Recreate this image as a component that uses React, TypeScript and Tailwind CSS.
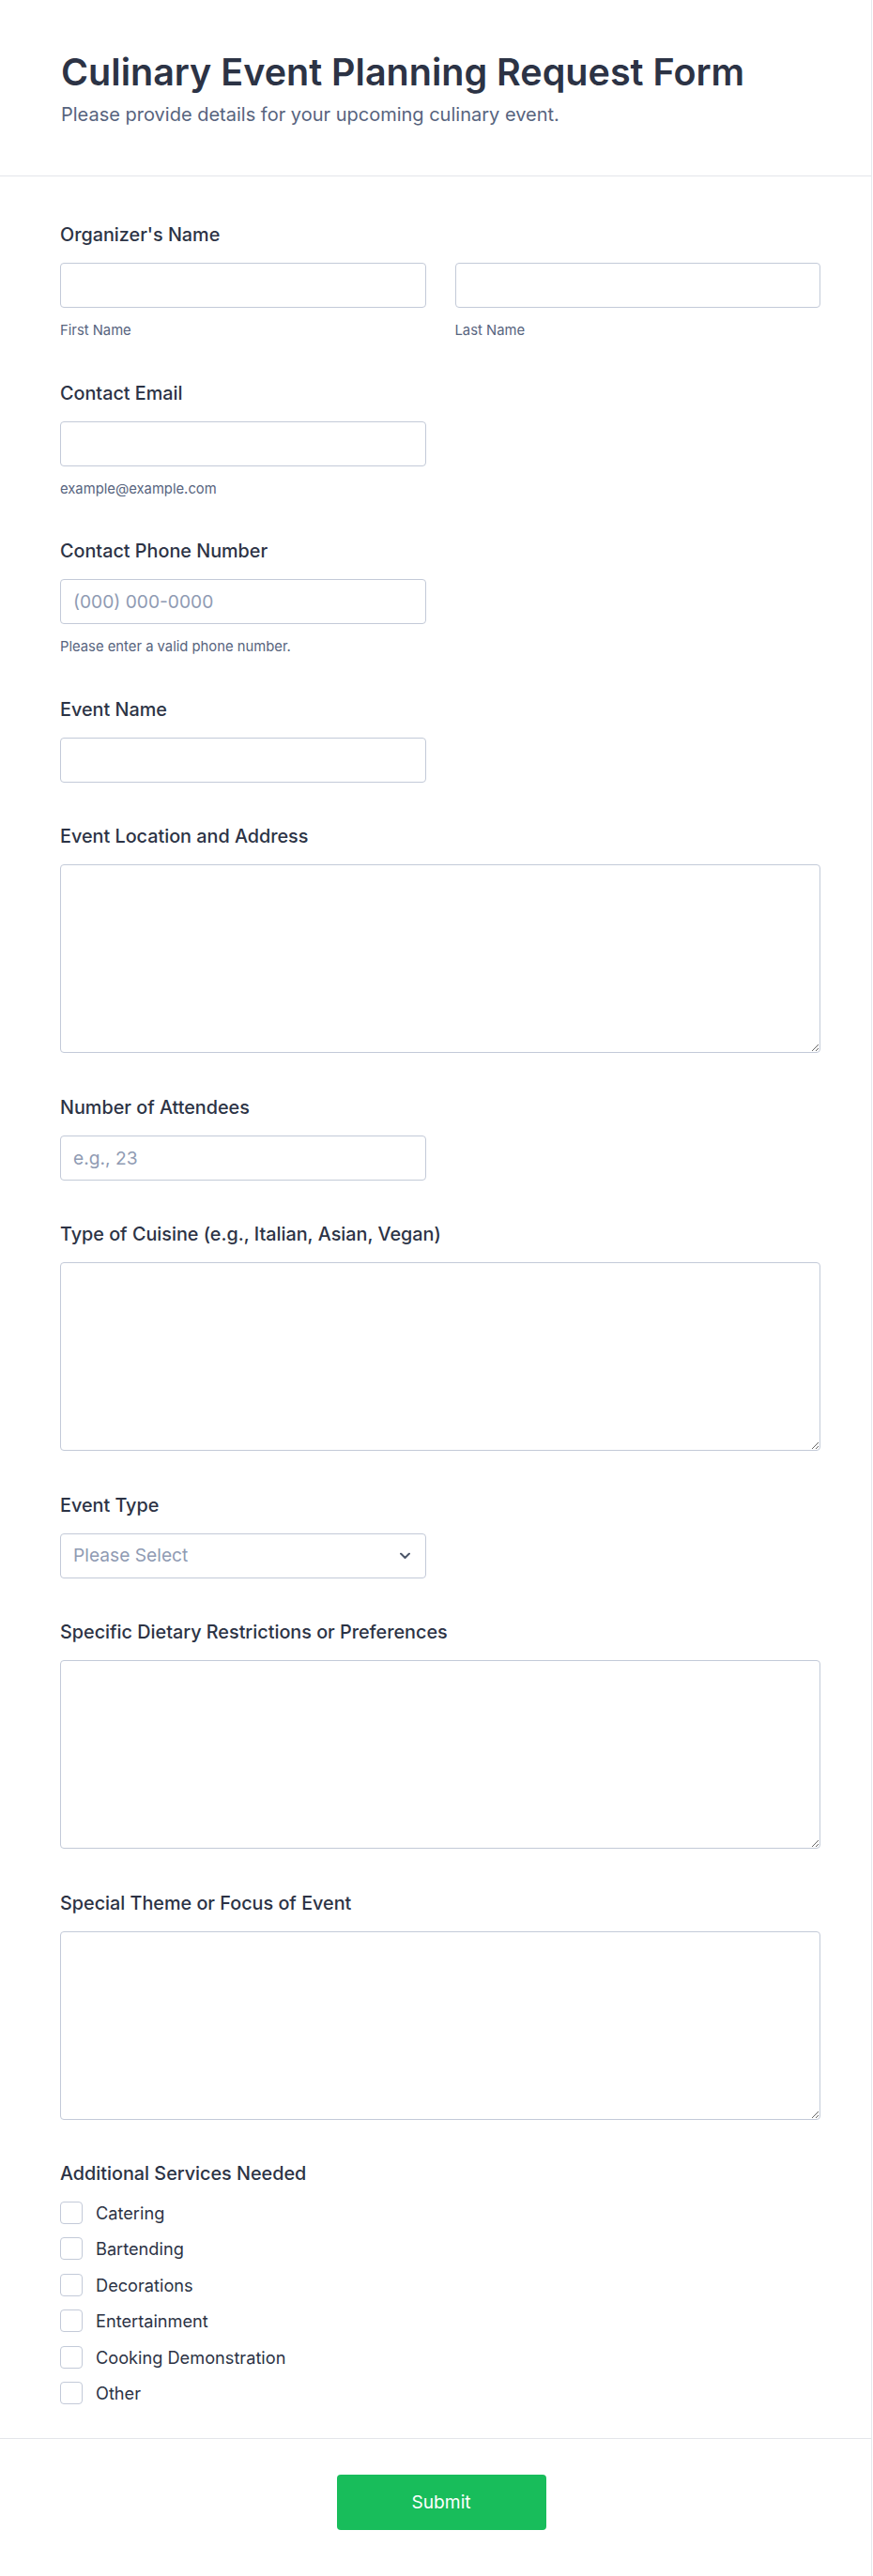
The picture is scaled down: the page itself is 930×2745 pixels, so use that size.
import React from "react";

const fieldClass =
  "block h-12 w-full rounded-[4px] border border-[#c3cad8] bg-white px-[13px] text-[19.2px] text-[#2c3345] placeholder:text-[#8f9bb3] outline-none";

const areaClass =
  "block h-[201px] w-full rounded-[4px] border border-[#c3cad8] bg-white px-[13px] py-[10px] text-[19.2px] text-[#2c3345] outline-none";

const services = [
  "Catering",
  "Bartending",
  "Decorations",
  "Entertainment",
  "Cooking Demonstration",
  "Other",
];

function Label({ children }: { children: React.ReactNode }) {
  return (
    <label className="mb-[18px] block text-[19.8px] leading-[23px] font-medium text-[#2c3345]">
      {children}
    </label>
  );
}

function SubLabel({ children }: { children: React.ReactNode }) {
  return <div className="mt-[16px] text-[14.8px] leading-[17px] text-[#57647e]">{children}</div>;
}

export default function App() {
  return (
    <div
      className="min-h-[2745px] w-[929px] border-r border-[#e6e9ee] bg-white"
      style={{ fontFamily: "Inter, 'Noto Sans', sans-serif" }}
    >
      {/* header */}
      <div className="border-b border-[#e3e5ea] pt-[53px] pb-[51px] pl-[65px]">
        <h1 className="text-[39.5px] leading-[48px] font-semibold text-[#2c3345]">
          Culinary Event Planning Request Form
        </h1>
        <p className="mt-[7px] text-[20px] leading-[28px] text-[#57647e]">
          Please provide details for your upcoming culinary event.
        </p>
      </div>

      {/* fields */}
      <div className="flex w-[874px] flex-col gap-[46.5px] pt-[51px] pb-[36px] pl-16">
        <div>
          <Label>Organizer's Name</Label>
          <div className="grid grid-cols-2 gap-[31px]">
            <div>
              <input type="text" className={fieldClass} />
              <SubLabel>First Name</SubLabel>
            </div>
            <div>
              <input type="text" className={fieldClass} />
              <SubLabel>Last Name</SubLabel>
            </div>
          </div>
        </div>

        <div>
          <Label>Contact Email</Label>
          <input type="email" className={`${fieldClass} !w-[390px]`} />
          <SubLabel>example@example.com</SubLabel>
        </div>

        <div>
          <Label>Contact Phone Number</Label>
          <input type="tel" placeholder="(000) 000-0000" className={`${fieldClass} !w-[390px]`} />
          <SubLabel>Please enter a valid phone number.</SubLabel>
        </div>

        <div>
          <Label>Event Name</Label>
          <input type="text" className={`${fieldClass} !w-[390px]`} />
        </div>

        <div>
          <Label>Event Location and Address</Label>
          <textarea className={areaClass} />
        </div>

        <div>
          <Label>Number of Attendees</Label>
          <input type="number" placeholder="e.g., 23" className={`${fieldClass} !w-[390px]`} />
        </div>

        <div>
          <Label>Type of Cuisine (e.g., Italian, Asian, Vegan)</Label>
          <textarea className={areaClass} />
        </div>

        <div>
          <Label>Event Type</Label>
          <div className="relative w-[390px]">
            <select
              defaultValue=""
              className="block h-12 w-full appearance-none rounded-[4px] border border-[#c3cad8] bg-white px-[13px] text-[19.2px] text-[#8f9bb3] outline-none"
            >
              <option value="" disabled>
                Please Select
              </option>
              <option>Private Dinner</option>
              <option>Cooking Class</option>
              <option>Food Festival</option>
              <option>Corporate Event</option>
            </select>
            <svg
              className="pointer-events-none absolute top-1/2 right-[17px] -translate-y-1/2"
              width="11"
              height="7"
              viewBox="0 0 11 7"
              fill="none"
            >
              <path d="M1 1l4.5 4.5L10 1" stroke="#4b5568" strokeWidth="2" strokeLinecap="round" strokeLinejoin="round" />
            </svg>
          </div>
        </div>

        <div>
          <Label>Specific Dietary Restrictions or Preferences</Label>
          <textarea className={areaClass} />
        </div>

        <div>
          <Label>Special Theme or Focus of Event</Label>
          <textarea className={areaClass} />
        </div>

        <div>
          <Label>Additional Services Needed</Label>
          <div className="flex flex-col gap-[14.4px]">
            {services.map((s) => (
              <label key={s} className="flex h-6 items-center gap-[14px] text-[18.2px] leading-6 text-[#2c3345]">
                <input
                  type="checkbox"
                  className="h-6 w-6 shrink-0 appearance-none rounded-[4px] border border-[#c3cad8] bg-white"
                />
                {s}
              </label>
            ))}
          </div>
        </div>
      </div>

      {/* footer */}
      <div className="flex justify-center border-t border-[#e3e5ea] pt-[38px] pb-[48px] pl-[12px]">
        <button className="h-[59px] w-[223px] rounded-[4px] bg-[#18bd5b] text-[19.2px] text-white">
          Submit
        </button>
      </div>
    </div>
  );
}
